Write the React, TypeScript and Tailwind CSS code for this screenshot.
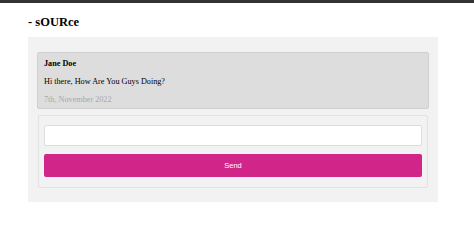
import React, { useState } from 'react';

export default function App() {
    const [text, setText] = useState('');

    return (
        <div className="min-h-screen bg-white font-['Liberation_Serif',serif]">
            <div className="h-[3px] bg-[#333333]" />
            <div className="pl-[28px] pr-[36px]">
                <h2 className="text-[12.5px] font-bold leading-none pt-[13px] h-[34px] text-black">- sOURce</h2>

                <div className="w-[410px] bg-[#f2f2f2] px-[9px] pt-[15px] pb-[14px]">
                    <div className="bg-[#dddddd] border border-[#cfcfcf] rounded-[2px] px-[6px] pt-[6px] pb-[4px] h-[57px]">
                        <p className="text-[8.2px] font-bold leading-[10px] text-black">Jane Doe</p>
                        <p className="text-[8.2px] leading-[10px] mt-[8px] text-black">Hi there, How Are You Guys Doing?</p>
                        <p className="text-[8.2px] leading-[10px] mt-[8px] text-[#a8a8a8]">7th, November 2022</p>
                    </div>

                    <div className="mt-[6px] border border-[#e2e2e2] rounded-[2px] px-[5px] pt-[9px] pb-[10px] ml-[1px] mr-[1px]">
                        <input
                            type="text"
                            value={text}
                            onChange={(e) => setText(e.target.value)}
                            className="block w-full h-[21px] bg-white border border-[#dddddd] rounded-[2px] outline-none px-2 text-[8px]"
                        />
                        <button className="block w-full h-[23px] mt-[8px] bg-[#d1258a] rounded-[2px] text-white text-[7.5px] font-['Liberation_Sans',Arial,sans-serif]">
                            Send
                        </button>
                    </div>
                </div>
            </div>
        </div>
    );
}
